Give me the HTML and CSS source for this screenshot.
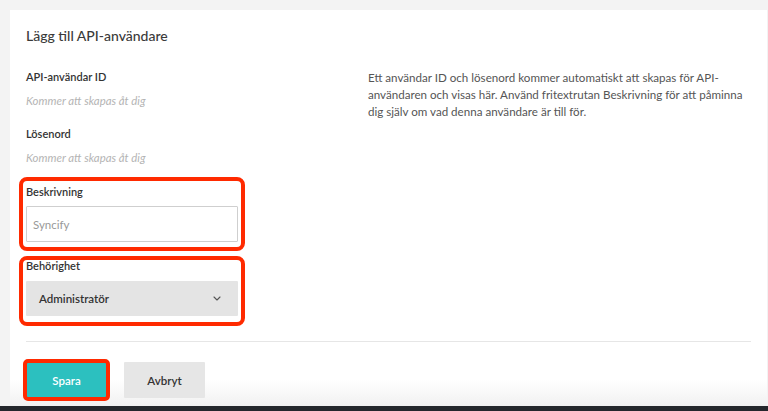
FILE: index.html
```html
<!DOCTYPE html>
<html lang="sv">
<head>
<meta charset="utf-8">
<title>Lägg till API-användare</title>
<link rel="stylesheet" href="styles.css">
</head>
<body>
<div class="page">
  <section class="card">
    <h1 class="title">Lägg till API-användare</h1>
    <div class="form-grid">
      <div class="fields">
        <div class="field">
          <div class="label">API-användar ID</div>
          <div class="placeholder">Kommer att skapas åt dig</div>
        </div>
        <div class="field field-gap">
          <div class="label">Lösenord</div>
          <div class="placeholder">Kommer att skapas åt dig</div>
        </div>
        <div class="group group-desc highlight">
          <div class="label">Beskrivning</div>
          <div class="input">Syncify</div>
        </div>
        <div class="group group-role highlight">
          <div class="label label-tight">Behörighet</div>
          <div class="select">
            <span>Administratör</span>
            <svg class="chevron" width="8" height="5" viewBox="0 0 8 5"><path d="M1 1l3 3 3-3" fill="none" stroke="#555" stroke-width="1.1" stroke-linecap="round" stroke-linejoin="round"/></svg>
          </div>
        </div>
      </div>
      <p class="help">Ett användar ID och lösenord kommer automatiskt att skapas för API-användaren och visas här. Använd fritextrutan Beskrivning för att påminna dig själv om vad denna användare är till för.</p>
    </div>
    <hr class="divider">
    <div class="actions">
      <button class="btn btn-primary highlight-btn">Spara</button>
      <button class="btn btn-secondary">Avbryt</button>
    </div>
  </section>
  <div class="taskbar"></div>
</div>
</body>
</html>
```

FILE: styles.css
```css
* { box-sizing: border-box; }

html, body {
  margin: 0;
  padding: 0;
  height: 100%;
}

body {
  background: #f3f3f3;
  font-family: Lato, "Open Sans", "Liberation Sans", sans-serif;
  color: #333;
  overflow: hidden;
}

.page {
  display: flex;
  flex-direction: column;
  height: 411px;
}

.card {
  margin: 10px 1px 0 10px;
  height: 396px;
  padding: 17px 16px 0 16px;
  background: linear-gradient(to bottom, #ffffff 0, #ffffff 370px, #f1f1f1 396px);
  display: flex;
  flex-direction: column;
}

.title {
  margin: 0;
  font-size: 14px;
  line-height: 18px;
  font-weight: 500;
  color: #3a3a3a;
}

.form-grid {
  display: flex;
  margin-top: 24px;
  gap: 130px;
}

.fields {
  width: 212px;
  flex: none;
  display: flex;
  flex-direction: column;
}

.label {
  font-size: 11px;
  line-height: 16px;
  font-weight: 600;
  color: #333;
}

.placeholder {
  margin-top: 8px;
  font-size: 11.4px;
  line-height: 16px;
  font-style: italic;
  color: #b4b4b4;
}

.field-gap { margin-top: 17px; }

.highlight {
  outline: 4px solid #ff2a00;
  outline-offset: 3px;
  border-radius: 1px;
}

.group-desc {
  margin-top: 18px;
  padding-bottom: 2px;
}

.input {
  margin-top: 6px;
  height: 36px;
  border: 1px solid #cfcfcf;
  border-radius: 1px;
  padding: 0 6px;
  display: flex;
  align-items: center;
  font-size: 11.5px;
  color: #999;
}

.group-role {
  margin-top: 19px;
  padding-bottom: 3px;
}

.label-tight {
  margin-top: -4px;
  line-height: 14px;
}

.select {
  margin-top: 8px;
  height: 35px;
  background: #e4e4e4;
  border-radius: 1px;
  padding: 0 17px 0 13px;
  display: flex;
  align-items: center;
  justify-content: space-between;
  font-size: 11.5px;
  font-weight: 600;
  color: #333;
}

.chevron { display: block; }

.help {
  margin: 0;
  flex: 1;
  font-size: 11.6px;
  line-height: 17px;
  color: #555;
}

.divider {
  margin: 22px 0 0 0;
  border: 0;
  border-top: 1px solid #e6e6e6;
  height: 0;
}

.actions {
  display: flex;
  gap: 17px;
  margin-top: 20px;
}

.btn {
  width: 81px;
  height: 36px;
  border: 0;
  border-radius: 1px;
  font-family: inherit;
  font-size: 11.5px;
  font-weight: 600;
  cursor: pointer;
}

.btn-primary {
  background: #2cc0bf;
  color: #ffffff;
}

.highlight-btn {
  outline: 4px solid #ff2a00;
  outline-offset: -1px;
  border-radius: 2px;
}

.btn-secondary {
  background: #e6e6e6;
  color: #333;
}

.taskbar {
  height: 5px;
  background: #24272c;
}
```
